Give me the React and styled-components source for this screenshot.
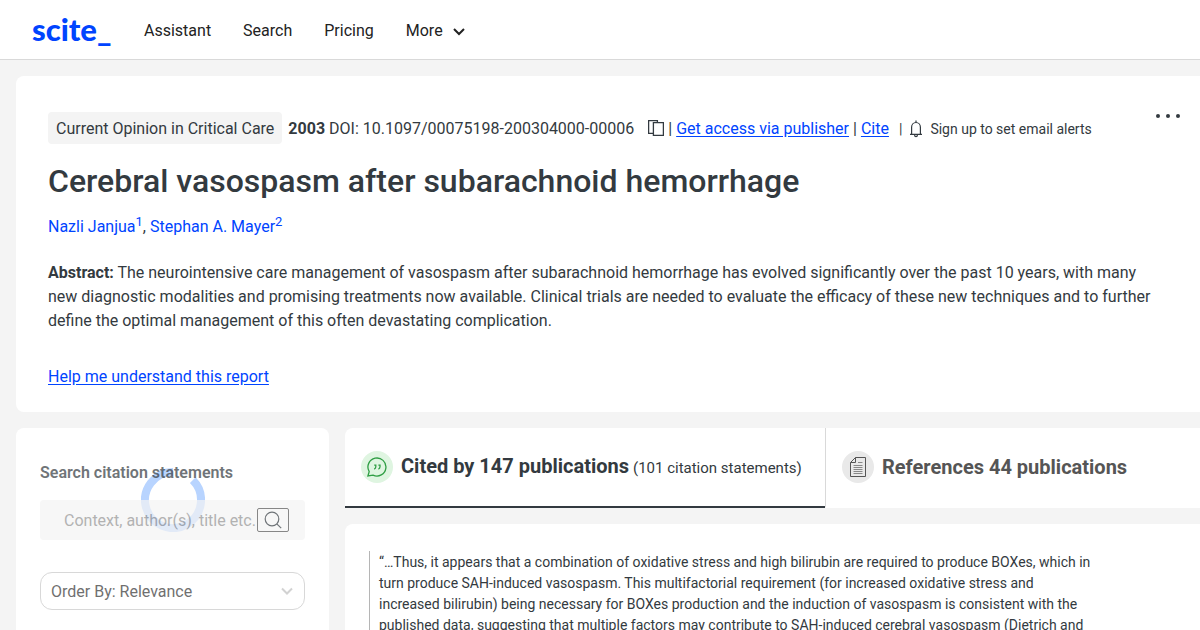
import React from 'react';
import styled, { createGlobalStyle } from 'styled-components';

const GlobalStyle = createGlobalStyle`
  *{
    box-sizing:border-box;
  }
  body{
    margin:0;
    background:#F4F4F4;
    color:#333A40;
    font-family:Roboto, "Liberation Sans", sans-serif;
    font-size:16px;
    line-height:24px;
  }
  button,input,select{
    font:inherit;
    color:inherit;
  }
  h1,h2,p,blockquote{
    margin:0;
  }
`

const Page = styled.div`
  display:flex;
  flex-direction:column;
  height:100vh;
  overflow:hidden;
`

const Header = styled.header`
  flex-shrink:0;
  display:flex;
  align-items:center;
  gap:32px;
  height:60px;
  padding:2px 32px 0;
  background:#FFFFFF;
  border-bottom:1px solid #D9D9D9;
`

const Logo = styled.a`
  width:80px;
  padding-bottom:4px;
  color:#0044FF;
  font-family:Lato, sans-serif;
  font-weight:900;
  font-size:31px;
  line-height:32px;
  text-decoration:none;
`

const Nav = styled.nav`
  display:flex;
  gap:32px;
`

const NavLink = styled.a`
  color:#222222;
  text-decoration:none;
`

const NavButton = styled.button`
  display:flex;
  align-items:center;
  gap:8px;
  padding:0;
  border:0;
  background:none;
  color:#222222;
`

const Main = styled.main`
  flex:1;
  min-height:0;
  display:flex;
  flex-direction:column;
  gap:16px;
  padding:16px 0 0 16px;
`

const Paper = styled.section`
  flex-shrink:0;
  display:flex;
  justify-content:space-between;
  align-items:flex-start;
  padding:36px 20px 23px 32px;
  background:#FFFFFF;
  border-radius:8px 0 0 8px;
`

const MenuButton = styled.button`
  display:flex;
  padding:0;
  border:0;
  background:none;
`

const Meta = styled.div`
  display:flex;
  align-items:baseline;
  gap:4px;
  white-space:nowrap;
`

const Journal = styled.span`
  margin-right:2px;
  padding:5px 8px 3px;
  background:#F4F4F4;
  border-radius:4px;
`

const CopyButton = styled.button`
  align-self:center;
  display:flex;
  width:16px;
  padding:0;
  margin-left:10px;
  border:0;
  background:none;
`

const Anchor = styled.a`
  color:#0044FF;
  text-underline-offset:2px;
`

const AlertButton = styled.button`
  display:flex;
  align-items:center;
  gap:6px;
  padding:0;
  margin-left:6px;
  border:0;
  background:none;
  font-size:14px;
`

const Title = styled.h1`
  margin-top:16px;
  font-size:32px;
  line-height:42px;
  font-weight:500;
  white-space:nowrap;
`

const Authors = styled.p`
  margin-top:13px;
`

const Author = styled.a`
  color:#0044FF;
  text-decoration:none;
  sup{
    font-size:13px;
    line-height:0;
  }
`

const Abstract = styled.p`
  margin-top:22px;
  white-space:nowrap;
`

const HelpLine = styled.p`
  margin-top:32px;
`

const Columns = styled.div`
  flex:1;
  min-height:0;
  display:flex;
  gap:16px;
`

const Sidebar = styled.aside`
  position:relative;
  flex:0 0 313px;
  min-width:0;
  padding:33px 24px;
  background:#FFFFFF;
  border-radius:8px 8px 0 0;
`

const Spinner = styled.svg`
  position:absolute;
  top:40px;
  left:50%;
  margin-left:-32px;
`

const Filters = styled.div`
  position:relative;
  opacity:0.7;
`

const SidebarTitle = styled.label`
  display:block;
  margin-bottom:15px;
  font-weight:600;
`

const SearchForm = styled.form`
  display:flex;
  align-items:center;
  height:40px;
  margin-bottom:32px;
  padding:0 16px 0 24px;
  background:#F4F4F4;
  border-radius:4px;
`

const SearchInput = styled.input`
  flex:1;
  min-width:0;
  padding:2px 0 0;
  border:0;
  outline:0;
  background:none;
  &::placeholder{
    color:#929292;
    opacity:1;
  }
`

const SearchButton = styled.button`
  flex-shrink:0;
  display:flex;
  align-items:center;
  justify-content:center;
  width:32px;
  height:24px;
  padding:0;
  border:1px solid #555555;
  border-radius:2px;
  background:none;
`

const SelectBox = styled.div`
  display:grid;
  align-items:center;
  select,svg{
    grid-area:1 / 1;
  }
  svg{
    justify-self:end;
    margin-right:12px;
    pointer-events:none;
  }
`

const Select = styled.select`
  appearance:none;
  width:100%;
  height:38px;
  padding:2px 10px 0;
  border:1px solid #C8C8C8;
  border-radius:12px;
  background:#FFFFFF;
  color:#333333;
`

const Results = styled.div`
  flex:1;
  min-width:0;
  display:flex;
  flex-direction:column;
  gap:16px;
`

const Tabs = styled.div`
  flex-shrink:0;
  display:flex;
  height:80px;
  background:#FFFFFF;
  border-radius:8px 0 0 0;
`

const Tab = styled.button`
  display:flex;
  align-items:center;
  gap:8px;
  flex:${props => props.$active ? '0 0 480px' : '1'};
  padding:0 16px;
  border:0;
  border-bottom:${props => props.$active ? '2px solid #333A40' : '2px solid transparent'};
  border-left:${props => props.$active ? '0' : '1px solid #D9D9D9'};
  background:none;
  color:${props => props.$active ? '#333A40' : '#555555'};
  white-space:nowrap;
`

const TabIcon = styled.span`
  flex-shrink:0;
  display:flex;
  align-items:center;
  justify-content:center;
  width:32px;
  height:32px;
  border-radius:50%;
  background:${props => props.$tint};
`

const TabLabel = styled.span`
  font-size:20px;
  font-weight:700;
`

const TabNote = styled.span`
  margin-left:4px;
  font-size:15px;
  font-weight:400;
`

const Citations = styled.section`
  flex:1;
  min-height:0;
  padding:27px 24px;
  background:#FFFFFF;
  border-radius:8px 0 0 0;
`

const Quote = styled.blockquote`
  padding:1px 0 0 9px;
  border-left:1px solid #B5B5B5;
  font-size:14px;
  line-height:21px;
  white-space:nowrap;
`

const App = () => (
  <>
    <GlobalStyle />
    <Page>
      <Header>
        <Logo href="#">scite_</Logo>
        <Nav>
          <NavLink href="#">Assistant</NavLink>
          <NavLink href="#">Search</NavLink>
          <NavLink href="#">Pricing</NavLink>
          <NavButton type="button">
            More
            <svg width="16" height="16" viewBox="0 0 16 16" fill="none" stroke="currentColor" strokeWidth="2">
              <path d="M3 6l5 5 5-5" />
            </svg>
          </NavButton>
        </Nav>
      </Header>
      <Main>
        <Paper>
          <div>
            <Meta>
              <Journal>Current Opinion in Critical Care</Journal>
              <strong>2003</strong>
              <span>DOI: 10.1097/00075198-200304000-00006</span>
              <CopyButton type="button" aria-label="Copy DOI">
                <svg width="16" height="16" viewBox="0 0 16 16" fill="none" stroke="currentColor" strokeWidth="1.3">
                  <path d="M5 13.4H.6V.6h8.8v2M5.4 2.6h10v12.8h-10z" />
                </svg>
              </CopyButton>
              <span>|</span>
              <Anchor href="#">Get access via publisher</Anchor>
              <span>|</span>
              <Anchor href="#">Cite</Anchor>
              <AlertButton type="button">
                <span>|</span>
                <svg width="16" height="18" viewBox="0 0 16 18" fill="none" stroke="currentColor" strokeWidth="1.2">
                  <path d="M2 14.4h12M3.6 14.2V7.2a4.4 4.7 0 0 1 8.8 0v7M8 2.4V.5M6.6 15c0 2.2 2.8 2.2 2.8 0" />
                </svg>
                Sign up to set email alerts
              </AlertButton>
            </Meta>
            <Title>Cerebral vasospasm after subarachnoid hemorrhage</Title>
            <Authors>
              <Author href="#">Nazli Janjua<sup>1</sup></Author>, <Author href="#">Stephan A. Mayer<sup>2</sup></Author>
            </Authors>
            <Abstract>
              <strong>Abstract:</strong> The neurointensive care management of vasospasm after subarachnoid hemorrhage has evolved significantly over the past 10 years, with many<br />
              new diagnostic modalities and promising treatments now available. Clinical trials are needed to evaluate the efficacy of these new techniques and to further<br />
              define the optimal management of this often devastating complication.
            </Abstract>
            <HelpLine><Anchor href="#">Help me understand this report</Anchor></HelpLine>
          </div>
          <MenuButton type="button" aria-label="More options">
            <svg width="24" height="8" viewBox="0 0 24 8" fill="currentColor">
              <circle cx="2" cy="4" r="2" />
              <circle cx="12" cy="4" r="2" />
              <circle cx="22" cy="4" r="2" />
            </svg>
          </MenuButton>
        </Paper>
        <Columns>
          <Sidebar>
            <Spinner width="64" height="64" viewBox="0 0 64 64" fill="none" stroke="#B8D4FF" strokeWidth="8">
              <path d="M51.8 12.2A28 28 0 1 1 32 4" />
            </Spinner>
            <Filters>
              <SidebarTitle htmlFor="statement-search">Search citation statements</SidebarTitle>
              <SearchForm>
                <SearchInput id="statement-search" placeholder="Context, author(s), title etc." />
                <SearchButton type="button" aria-label="Search">
                  <svg width="18" height="18" viewBox="0 0 18 18" fill="none" stroke="currentColor" strokeWidth="1.2">
                    <circle cx="8" cy="8" r="6.8" />
                    <path d="M12.8 12.8l4.4 4.4" />
                  </svg>
                </SearchButton>
              </SearchForm>
              <SelectBox>
                <Select aria-label="Order results" defaultValue="relevance">
                  <option value="relevance">Order By: Relevance</option>
                </Select>
                <svg width="12" height="8" viewBox="0 0 12 8" fill="none" stroke="#C0C0C0" strokeWidth="2">
                  <path d="M1 1.5l5 5 5-5" />
                </svg>
              </SelectBox>
            </Filters>
          </Sidebar>
          <Results>
            <Tabs>
              <Tab type="button" $active>
                <TabIcon $tint="#DFF5E1">
                  <svg width="20" height="20" viewBox="0 0 20 20" fill="none" stroke="#2F9E44" strokeWidth="1.3">
                    <path d="M.9 19l1.3-4.4A9 9 0 1 1 6 18.1z" />
                    <path d="M7.2 8.2h1.6v1.6c0 1.4-.7 2-1.6 2.3M11.4 8.2H13v1.6c0 1.4-.7 2-1.6 2.3" />
                  </svg>
                </TabIcon>
                <TabLabel>Cited by 147 publications<TabNote>(101 citation statements)</TabNote></TabLabel>
              </Tab>
              <Tab type="button">
                <TabIcon $tint="#E9E9E9">
                  <svg width="16" height="20" viewBox="0 0 16 20" fill="none" stroke="#555555">
                    <path d="M5.5.5h10v19H.5v-14zM5.5.5v5h-5" />
                    <path d="M8 5.5h4.5M3.5 8.5h9M3.5 10.5h9M3.5 12.5h9M3.5 14.5h9M3.5 16.5h9" stroke="#888888" />
                  </svg>
                </TabIcon>
                <TabLabel>References 44 publications</TabLabel>
              </Tab>
            </Tabs>
            <Citations>
              <Quote>
                “…Thus, it appears that a combination of oxidative stress and high bilirubin are required to produce BOXes, which in<br />
                turn produce SAH-induced vasospasm. This multifactorial requirement (for increased oxidative stress and<br />
                increased bilirubin) being necessary for BOXes production and the induction of vasospasm is consistent with the<br />
                published data, suggesting that multiple factors may contribute to SAH-induced cerebral vasospasm (Dietrich and
              </Quote>
            </Citations>
          </Results>
        </Columns>
      </Main>
    </Page>
  </>
);

export default App;
